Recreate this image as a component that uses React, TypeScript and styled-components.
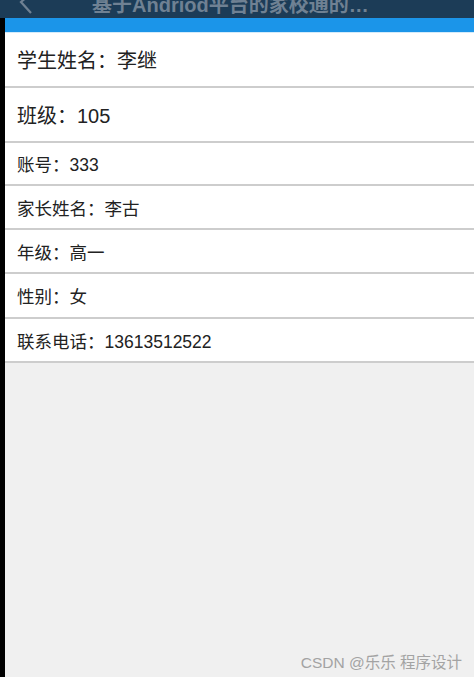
import React from "react";
import styled, { createGlobalStyle } from "styled-components";

const Global = createGlobalStyle`
  html, body { margin: 0; padding: 0; background: #000; }
  body { font-family: "Liberation Sans", "Noto Sans CJK SC", sans-serif; }
  * { box-sizing: border-box; }
`;

const Screen = styled.div`
  display: flex;
  flex-direction: column;
  width: 474px;
  height: 677px;
  overflow: hidden;
  background: #000;
`;

const TopBar = styled.div`
  position: relative;
  height: 18px;
  flex: none;
  background: #1c3c57;
  overflow: hidden;
  display: flex;
  align-items: flex-end;
`;

const Back = styled.svg`
  position: absolute;
  left: 18px;
  top: -6px;
`;

const Title = styled.div`
  margin-left: 92px;
  margin-bottom: 3px;
  font-size: 20px;
  line-height: 20px;
  font-weight: bold;
  color: #6f8193;
  white-space: nowrap;
`;

const Body = styled.div`
  flex: 1;
  display: flex;
  flex-direction: column;
  margin-left: 5px;
  background: #f0f0f0;
`;

const BlueBar = styled.div`
  height: 15px;
  flex: none;
  background: #1b95e9;
  border-bottom: 1px solid #d4ebfa;
`;

const List = styled.div`
  display: flex;
  flex-direction: column;
  background: #fff;
`;

const Row = styled.div<{ $h: number; $big?: boolean }>`
  height: ${(p) => p.$h + 2}px;
  display: flex;
  align-items: center;
  padding-left: 12px;
  border-bottom: 2px solid #cdcdcd;
  font-size: ${(p) => (p.$big ? 20 : 17.5)}px;
  color: #222;
  white-space: nowrap;
`;

const Filler = styled.div`
  flex: 1;
  display: flex;
  justify-content: flex-end;
  align-items: flex-end;
  padding: 0 12px 5px 0;
`;

const Watermark = styled.div`
  font-size: 15.5px;
  color: #a3a3a3;
  line-height: 18px;
`;

const rows: { text: string; h: number; big?: boolean }[] = [
  { text: "学生姓名：李继", h: 53, big: true },
  { text: "班级：105", h: 53, big: true },
  { text: "账号：333", h: 41 },
  { text: "家长姓名：李古", h: 42 },
  { text: "年级：高一", h: 42 },
  { text: "性别：女", h: 43 },
  { text: "联系电话：13613512522", h: 42 },
];

export default function App() {
  return (
    <Screen>
      <Global />
      <TopBar>
        <Back width="20" height="22" viewBox="0 0 20 22">
          <path d="M10 2 L3 8 L13 19" fill="none" stroke="#6f8193" strokeWidth="2.2" />
        </Back>
        <Title>基于Andriod平台的家校通的…</Title>
      </TopBar>
      <Body>
        <BlueBar />
        <List>
          {rows.map((r) => (
            <Row key={r.text} $h={r.h} $big={r.big}>
              {r.text}
            </Row>
          ))}
        </List>
        <Filler>
          <Watermark>CSDN @乐乐 程序设计</Watermark>
        </Filler>
      </Body>
    </Screen>
  );
}
